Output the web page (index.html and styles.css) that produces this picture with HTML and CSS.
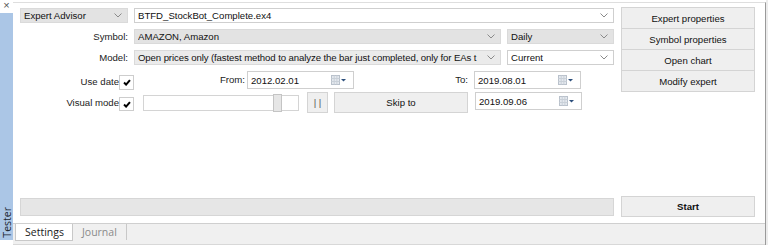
FILE: index.html
```html
<!DOCTYPE html>
<html lang="en">
<head>
  <meta charset="UTF-8" />
  <title>Tester</title>
  <link rel="stylesheet" href="styles.css">
</head>
<body>
  <div class="side">
    <div class="close">&times;</div>
    <div class="side-tab"><span>Tester</span></div>
  </div>

  <div class="panel">
    <div class="main">
      <div class="top">
        <div class="fields">
          <div class="row">
            <div class="combo combo-ro ea-type"><span>Expert Advisor</span><svg class="chev" viewBox="0 0 8 5"><polyline points="0.5,0.5 4,4 7.5,0.5"/></svg></div>
            <div class="combo grow"><span>BTFD_StockBot_Complete.ex4</span><svg class="chev" viewBox="0 0 8 5"><polyline points="0.5,0.5 4,4 7.5,0.5"/></svg></div>
          </div>
          <div class="row">
            <span class="lbl">Symbol:</span>
            <div class="combo combo-ro wide"><span>AMAZON, Amazon</span><svg class="chev" viewBox="0 0 8 5"><polyline points="0.5,0.5 4,4 7.5,0.5"/></svg></div>
            <div class="combo combo-ro period"><span>Daily</span><svg class="chev" viewBox="0 0 8 5"><polyline points="0.5,0.5 4,4 7.5,0.5"/></svg></div>
          </div>
          <div class="row">
            <span class="lbl">Model:</span>
            <div class="combo combo-ro light wide"><span class="fit">Open prices only (fastest method to analyze the bar just completed, only for EAs t</span><svg class="chev" viewBox="0 0 8 5"><polyline points="0.5,0.5 4,4 7.5,0.5"/></svg></div>
            <div class="combo period"><span>Current</span><svg class="chev" viewBox="0 0 8 5"><polyline points="0.5,0.5 4,4 7.5,0.5"/></svg></div>
          </div>
          <div class="row">
            <span class="chk-lbl">Use date</span>
            <span class="chk"><svg viewBox="0 0 10 9"><path d="M1.2 4.6 L3.8 7.2 L8.8 1.4"/></svg></span>
            <span class="date-lbl from">From:</span>
            <div class="date"><span>2012.02.01</span><svg class="cal" viewBox="0 0 16 10"><rect x="0.5" y="0.5" width="8" height="9" fill="#e4e8ee" stroke="#b9c1cb"/><path d="M0.5 3.5h8M0.5 6.5h8M3.2 0.5v9M5.9 0.5v9" stroke="#c9d0d8"/><polygon points="10,4 15,4 12.5,6.5" fill="#2c4f7c"/></svg></div>
            <span class="date-lbl to">To:</span>
            <div class="date"><span>2019.08.01</span><svg class="cal" viewBox="0 0 16 10"><rect x="0.5" y="0.5" width="8" height="9" fill="#e4e8ee" stroke="#b9c1cb"/><path d="M0.5 3.5h8M0.5 6.5h8M3.2 0.5v9M5.9 0.5v9" stroke="#c9d0d8"/><polygon points="10,4 15,4 12.5,6.5" fill="#2c4f7c"/></svg></div>
          </div>
          <div class="row">
            <span class="chk-lbl">Visual mode</span>
            <span class="chk chk-low"><svg viewBox="0 0 10 9"><path d="M1.2 4.6 L3.8 7.2 L8.8 1.4"/></svg></span>
            <div class="slider"><div class="thumb"></div></div>
            <button class="btn pause">| |</button>
            <button class="btn skip">Skip to</button>
            <div class="date"><span>2019.09.06</span><svg class="cal" viewBox="0 0 16 10"><rect x="0.5" y="0.5" width="8" height="9" fill="#e4e8ee" stroke="#b9c1cb"/><path d="M0.5 3.5h8M0.5 6.5h8M3.2 0.5v9M5.9 0.5v9" stroke="#c9d0d8"/><polygon points="10,4 15,4 12.5,6.5" fill="#2c4f7c"/></svg></div>
          </div>
        </div>

        <div class="actions">
          <button class="btn act">Expert properties</button>
          <button class="btn act">Symbol properties</button>
          <button class="btn act">Open chart</button>
          <button class="btn act">Modify expert</button>
        </div>
      </div>

      <div class="bottom">
        <div class="progress"></div>
        <button class="btn start">Start</button>
      </div>
    </div>

    <div class="tabs">
      <div class="tab active">Settings</div>
      <div class="tab">Journal</div>
    </div>
  </div>

  <div class="edge"></div>
</body>
</html>
```

FILE: styles.css
```css
body {
  margin: 0;
  width: 768px;
  height: 245px;
  display: flex;
  overflow: hidden;
  background-color: #fff;
  color: #111;
  font-family: "Liberation Sans", Arial, sans-serif;
  font-size: 9.6px;
}

/* left docking strip */
.side {
  width: 13px;
  display: flex;
  flex-direction: column;
}

.close {
  height: 13px;
  line-height: 11px;
  text-align: center;
  font-size: 11px;
  color: #555;
}

.side-tab {
  flex: 1;
  margin-bottom: 5px;
  background-color: #abc6e6;
  display: flex;
  flex-direction: column;
  justify-content: flex-end;
  align-items: center;
}

.side-tab span {
  writing-mode: vertical-rl;
  transform: rotate(180deg);
  font-family: "Open Sans", sans-serif;
  font-size: 10.5px;
  color: #1d2733;
  padding-top: 2px;
}

.panel {
  flex: 1;
  margin-top: 2px;
  border-top: 1px solid #dedede;
  border-right: 1px solid #9a9a9a;
  display: flex;
  flex-direction: column;
}

.edge {
  width: 2px;
  background-color: #ececec;
}

.main {
  flex: 1;
  padding: 4px 10px 0 7px;
  display: flex;
  flex-direction: column;
  justify-content: space-between;
}

.top {
  display: flex;
  gap: 7px;
}

.fields {
  width: 594px;
  padding-top: 1px;
}

.row {
  height: 21px;
  display: flex;
  align-items: flex-start;
}

/* combo boxes */
.combo {
  height: 15px;
  box-sizing: border-box;
  border: 1px solid #cfcfcf;
  background-color: #fff;
  display: flex;
  align-items: center;
  padding: 0 5px 0 3px;
  margin-right: 6px;
}

.combo span {
  flex: 1;
  white-space: nowrap;
  overflow: hidden;
}

.combo span.fit {
  letter-spacing: -0.1px;
}

.combo:last-child {
  margin-right: 0;
}

.combo-ro {
  background-color: #e3e3e3;
  border-color: #dadada;
}

.combo-ro.light {
  background-color: #ebebeb;
}

.chev {
  width: 8px;
  height: 5px;
  margin-left: 4px;
  flex-shrink: 0;
  fill: none;
  stroke: #8a8a8a;
  stroke-width: 1;
}

.ea-type {
  width: 108px;
}

.grow {
  flex: 1;
}

.wide {
  width: 367px;
}

.period {
  width: 107px;
}

.lbl {
  width: 108px;
  margin-right: 6px;
  text-align: right;
  line-height: 15px;
  color: #222;
}

/* date / check rows */
.chk-lbl {
  width: 99px;
  text-align: right;
  line-height: 21px;
  color: #222;
}

.chk {
  width: 15px;
  height: 15px;
  box-sizing: border-box;
  border: 1px solid #cdcdcd;
  background-color: #fff;
  margin-top: 4px;
  display: flex;
  align-items: center;
  justify-content: center;
}

.chk-low {
  margin-top: 5px;
  height: 14px;
}

.chk svg {
  width: 8px;
  height: 7px;
  fill: none;
  stroke: #000;
  stroke-width: 2.6;
}

.date-lbl {
  text-align: right;
  line-height: 18px;
  color: #222;
}

.date-lbl.from {
  width: 111px;
  padding-right: 2px;
}

.date-lbl.to {
  width: 114px;
  padding-right: 6px;
}

.date {
  width: 107px;
  height: 18px;
  box-sizing: border-box;
  border: 1px solid #cfcfcf;
  background-color: #fff;
  display: flex;
  align-items: center;
  padding: 0 6px 0 3px;
}

.date span {
  flex: 1;
}

.cal {
  width: 16px;
  height: 10px;
}

.slider {
  position: relative;
  width: 156px;
  height: 16px;
  box-sizing: border-box;
  margin: 3px 0 0 9px;
  border: 1px solid #d4d4d4;
  background-color: #fff;
}

.thumb {
  position: absolute;
  left: 129px;
  top: -2px;
  width: 9px;
  height: 18px;
  box-sizing: border-box;
  border: 1px solid #c4c4c4;
  background-color: #e6e6e6;
}

/* buttons */
.btn {
  box-sizing: border-box;
  height: 21px;
  margin: 0;
  padding: 0;
  border: 1px solid #d4d4d4;
  background-color: #efefef;
  font-family: inherit;
  font-size: inherit;
  color: #111;
}

.pause {
  width: 21px;
  margin-left: 8px;
  color: #555;
}

.skip {
  width: 134px;
  margin-left: 6px;
  margin-right: 7px;
}

.actions {
  width: 134px;
  display: flex;
  flex-direction: column;
}

.act {
  height: 22px;
  margin-bottom: -1px;
}

.bottom {
  display: flex;
  align-items: center;
  gap: 7px;
  margin-bottom: 6px;
}

.progress {
  width: 594px;
  height: 18px;
  box-sizing: border-box;
  border: 1px solid #d6d6d6;
  background-color: #e6e6e6;
}

.start {
  width: 134px;
  font-weight: bold;
}

/* bottom tabs */
.tabs {
  height: 22px;
  box-sizing: border-box;
  border-top: 1px solid #cfcfcf;
  border-bottom: 1px solid #d8d8d8;
  background-color: #f0f0f0;
  display: flex;
  align-items: flex-start;
  padding-left: 2px;
}

.tab {
  height: 16px;
  line-height: 16px;
  padding: 0 9px 0 9px;
  font-family: "Open Sans", sans-serif;
  font-size: 10.5px;
  color: #8a8a8a;
  border-right: 1px solid #c8c8c8;
}

.tab.active {
  width: 38px;
  background-color: #fff;
  color: #1a1a1a;
  border-left: 1px solid #c8c8c8;
  border-bottom: 1px solid #c8c8c8;
}
```
